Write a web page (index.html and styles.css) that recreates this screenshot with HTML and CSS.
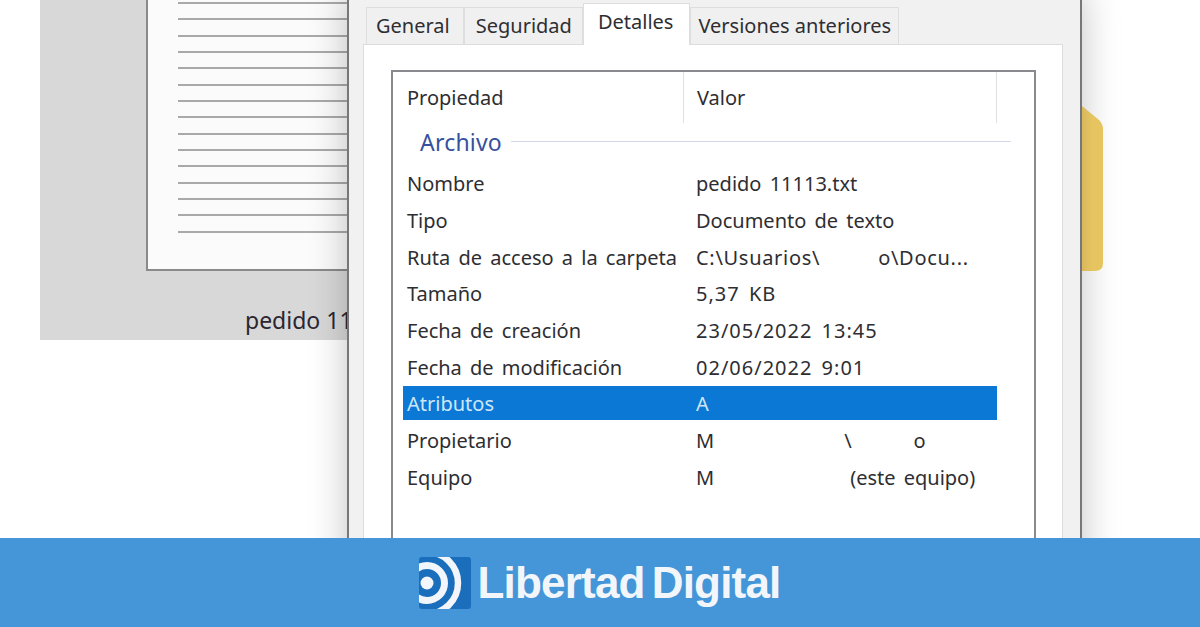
FILE: index.html
```html
<!DOCTYPE html>
<html>
<head>
	<title>Libertad Digital</title>
	<meta name="viewport" content="width=device-width, initial-scale=1" />
	<link rel="stylesheet" href="styles.css">
</head>
<body>
	<div class="scene">
		<div class="thumb">
			<div class="page">
				<div class="page-lines">
					<i></i><i></i><i></i><i></i><i></i><i></i><i></i><i></i><i></i><i></i><i></i><i></i><i></i><i></i><i></i>
				</div>
			</div>
			<div class="thumb-name">pedido 11</div>
		</div>
		<div class="dialog">
			<div class="tabs">
				<div class="tab first">General</div>
				<div class="tab second">Seguridad</div>
				<div class="tab active">Detalles</div>
				<div class="tab last">Versiones anteriores</div>
			</div>
			<div class="panel">
				<div class="list">
					<div class="list-head">
						<div class="col-a">Propiedad</div>
						<div class="col-b">Valor</div>
					</div>
					<div class="group"><span>Archivo</span><i></i></div>
					<div class="row"><div class="col-a">Nombre</div><div>pedido 11113.txt</div></div>
					<div class="row"><div class="col-a">Tipo</div><div>Documento de texto</div></div>
					<div class="row"><div class="col-a">Ruta de acceso a la carpeta</div><div class="path">C:\Usuarios\<span class="gap-1"></span>o\Docu...</div></div>
					<div class="row"><div class="col-a">Tamaño</div><div class="num">5,37 KB</div></div>
					<div class="row"><div class="col-a">Fecha de creación</div><div class="num">23/05/2022 13:45</div></div>
					<div class="row"><div class="col-a">Fecha de modificación</div><div class="num">02/06/2022 9:01</div></div>
					<div class="row selected"><div class="col-a">Atributos</div><div>A</div></div>
					<div class="row"><div class="col-a">Propietario</div><div>M<span class="gap-2"></span>\<span class="gap-3"></span>o</div></div>
					<div class="row"><div class="col-a">Equipo</div><div>M<span class="gap-4"></span>(este equipo)</div></div>
				</div>
			</div>
		</div>
		<div class="folder"></div>
	</div>
	<div class="brand">
		<svg class="brand-icon" width="52" height="52" viewBox="0 0 52 52">
			<defs>
				<clipPath id="icon-clip"><rect width="52" height="52" rx="3"/></clipPath>
			</defs>
			<rect width="52" height="52" rx="3" fill="#1b6ebc"/>
			<g clip-path="url(#icon-clip)" fill="none" stroke="#f2f6fa">
				<circle cx="8" cy="26" r="6.5" fill="#f2f6fa" stroke="none"/>
				<circle cx="8" cy="26" r="17.5" stroke-width="7"/>
				<circle cx="8" cy="26" r="31" stroke-width="6.5"/>
			</g>
		</svg>
		<div class="brand-name"><span>Libertad</span><span>Digital</span></div>
	</div>
</body>
</html>
```

FILE: styles.css
```css
html, body {
	height: 100%;
}

body {
	margin: 0;
	display: flex;
	flex-direction: column;
	overflow: hidden;
	background: #fff;
	font-family: "Noto Sans", "Open Sans", sans-serif;
	font-size: 20px;
	word-spacing: 3px;
	color: #2e2e32;
}

.scene {
	position: relative;
	flex: 1;
	overflow: hidden;
}

/* desktop items behind the dialog */
.thumb {
	position: absolute;
	left: 40px;
	top: 0;
	width: 320px;
	height: 340px;
	background: #d8d8d8;
}

.page {
	position: absolute;
	left: 106px;
	top: -10px;
	width: 260px;
	height: 281px;
	box-sizing: border-box;
	background: #fbfbfc;
	border: 2px solid #8a8a8a;
	border-right: 0;
	padding: 0 0 0 30px;
}

.page-lines {
	display: flex;
	flex-direction: column;
	gap: 14.33px;
	padding-top: 10px;
}

.page-lines i {
	display: block;
	height: 2px;
	background: #a9a9a9;
}

.thumb-name {
	position: absolute;
	left: 205px;
	top: 305px;
	font-size: 23px;
	word-spacing: 0;
	line-height: 30px;
	color: #2c2630;
	white-space: nowrap;
}

.folder {
	position: absolute;
	left: 1082px;
	top: 106px;
	width: 21px;
	height: 165px;
	background: linear-gradient(to right, #d8b85c, #e6c560 50%);
	clip-path: path("M0 0 L17 14 Q21 18 21 23 V157 Q21 165 13 165 H0 Z");
}

.dialog {
	position: absolute;
	left: 347px;
	top: -10px;
	width: 735px;
	height: 640px;
	box-sizing: border-box;
	background: #f1f1f1;
	border-left: 2px solid #77777b;
	border-right: 2px solid #77777b;
	box-shadow: 0 0 36px rgba(0, 0, 0, 0.24);
	padding: 13px 17px 0 14px;
}

.tabs {
	display: flex;
	align-items: flex-end;
	height: 41px;
	padding-left: 3px;
}

.tab {
	height: 37px;
	box-sizing: border-box;
	padding: 0 11px;
	background: #f0f0f0;
	border: 1px solid #dedede;
	border-bottom: 0;
	font-size: 20px;
	word-spacing: 0;
	line-height: 36px;
	white-space: nowrap;
}

.tab.first {
	padding: 0 13px 0 9px;
}

.tab.second {
	padding: 0 10px 0 11px;
}

.tab.active {
	height: 42px;
	margin-bottom: -1px;
	padding: 0 16px 0 14px;
	background: #fff;
	position: relative;
	z-index: 1;
}

.tab.last {
	padding: 0 7px;
}

.panel {
	background: #fff;
	border: 1px solid #dcdcdc;
	height: 100%;
	box-sizing: border-box;
	padding: 25px 26px 0 27px;
}

.list {
	height: 100%;
	box-sizing: border-box;
	border: 2px solid #8a8a8e;
	padding: 0 37px 0 10px;
}

.list-head {
	display: flex;
	height: 51px;
	line-height: 51px;
	padding-left: 4px;
}

.col-a {
	width: 293px;
	flex: none;
	padding-left: 4px;
	box-sizing: border-box;
	white-space: nowrap;
}

.list-head .col-a {
	width: 277px;
	padding-left: 0;
	border-right: 1px solid #dfdfe2;
}

.list-head .col-b {
	width: 313px;
	padding-left: 13px;
	box-sizing: border-box;
	border-right: 1px solid #dfdfe2;
}

.group {
	display: flex;
	align-items: center;
	gap: 9px;
	height: 41px;
	padding-left: 17px;
	margin-right: -14px;
	color: #35519e;
	font-size: 23px;
	letter-spacing: 0.2px;
}

.group span {
	margin-top: -4px;
}

.group i {
	flex: 1;
	height: 1px;
	margin-top: -4px;
	background: #d2d7ea;
}

.row {
	display: flex;
	height: 36.75px;
	line-height: 39px;
	white-space: nowrap;
}

.row.selected {
	background: #0a78d4;
	background-clip: padding-box;
	border-top: 1px solid transparent;
	border-bottom: 1px solid transparent;
	box-sizing: border-box;
	line-height: 35px;
	color: #cfe6f8;
}

.num {
	letter-spacing: 1px;
}

.path {
	letter-spacing: 0.7px;
}

.gap-1 {
	display: inline-block;
	width: 58px;
}

.gap-2 {
	display: inline-block;
	width: 130px;
}

.gap-3 {
	display: inline-block;
	width: 62px;
}

.gap-4 {
	display: inline-block;
	width: 136px;
}

/* bottom bar */
.brand {
	flex: none;
	height: 89px;
	display: flex;
	align-items: center;
	justify-content: center;
	gap: 6px;
	background: #4496d8;
}

.brand-name {
	display: flex;
	gap: 7px;
	font-family: "Liberation Sans", Arial, sans-serif;
	font-weight: 700;
	font-size: 44px;
	word-spacing: 0;
	letter-spacing: -0.8px;
	color: #f2f6fa;
}
```
